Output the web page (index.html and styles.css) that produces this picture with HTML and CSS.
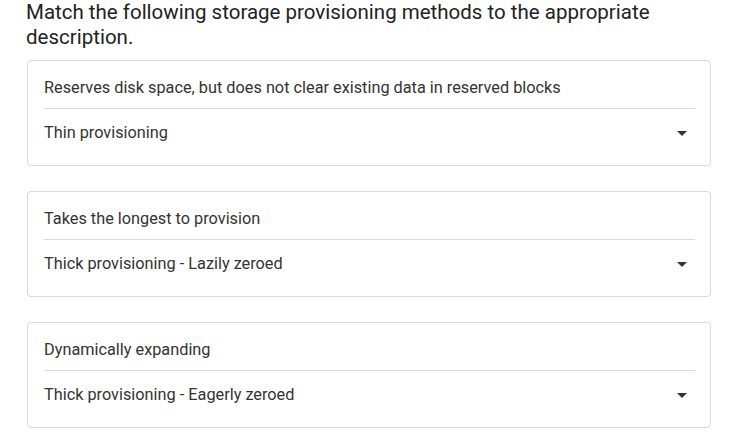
FILE: index.html
```html
<!DOCTYPE html>
<html lang="en">
    <head>
        <meta charset="UTF-8" />
        <meta name="viewport" content="width=device-width, initial-scale=1.0" />
        <title>Matching question</title>
        <link rel="stylesheet" href="styles.css">
    </head>

    <body>
        <div class="question">
            <h2 class="question-title">Match the following storage provisioning methods to the appropriate description.</h2>

            <div class="match-card">
                <div class="match-prompt">Reserves disk space, but does not clear existing data in reserved blocks</div>
                <div class="match-select">
                    <span>Thin provisioning</span>
                    <svg class="caret" width="10" height="5" viewBox="0 0 10 5"><path d="M0 0L5 5L10 0Z" /></svg>
                </div>
            </div>

            <div class="match-card">
                <div class="match-prompt">Takes the longest to provision</div>
                <div class="match-select">
                    <span>Thick provisioning - Lazily zeroed</span>
                    <svg class="caret" width="10" height="5" viewBox="0 0 10 5"><path d="M0 0L5 5L10 0Z" /></svg>
                </div>
            </div>

            <div class="match-card">
                <div class="match-prompt">Dynamically expanding</div>
                <div class="match-select">
                    <span>Thick provisioning - Eagerly zeroed</span>
                    <svg class="caret" width="10" height="5" viewBox="0 0 10 5"><path d="M0 0L5 5L10 0Z" /></svg>
                </div>
            </div>
        </div>
    </body>
</html>
```

FILE: styles.css
```css
body {
    margin: 0;
    background: #fff;
    font-family: Roboto, 'Noto Sans', sans-serif;
    color: #333;
}

.question {
    width: 684px;
    padding-left: 27px;
}

.question-title {
    margin: 0 0 10px -1px;
    font-size: 20.5px;
    line-height: 25px;
    font-weight: 400;
    color: #222;
}

.match-card {
    border: 1px solid #d5dadf;
    border-radius: 4px;
    padding: 0 15px 0 16px;
    margin-bottom: 25px;
    font-size: 16.3px;
    line-height: 24px;
}

.match-prompt {
    padding: 15px 0 8px;
    border-bottom: 1px solid #d5dadf;
}

.match-select {
    display: flex;
    align-items: center;
    justify-content: space-between;
    padding: 12px 8px 20px 0;
}

.caret {
    fill: #333;
}
```
